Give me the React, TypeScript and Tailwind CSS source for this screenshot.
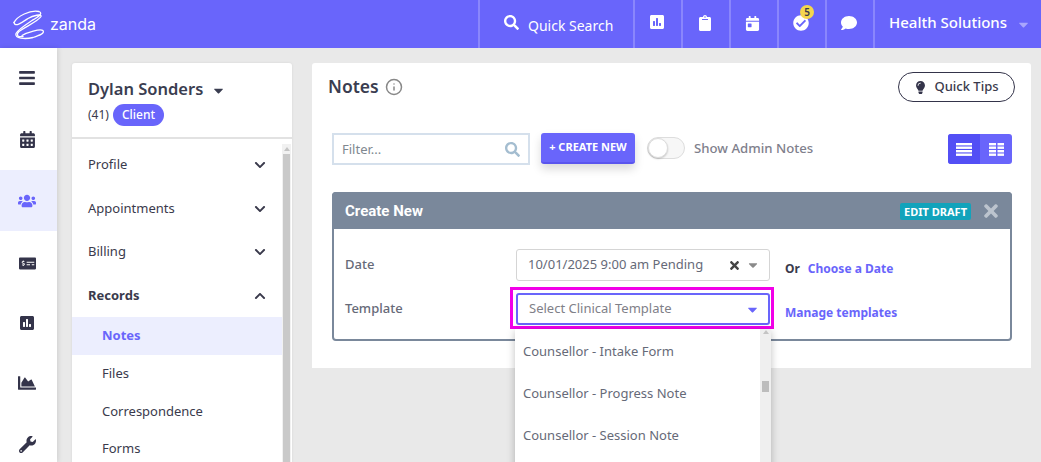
import React from 'react';
import {
  FaBars, FaCalendarAlt, FaCalendarDay, FaCaretDown, FaChartArea, FaCheckCircle, FaChevronDown, FaChevronUp,
  FaClipboard, FaComment, FaLightbulb, FaMoneyCheckAlt, FaPoll, FaSearch, FaTimes, FaUsers, FaWrench,
} from 'react-icons/fa';
import { FiInfo } from 'react-icons/fi';

const font = 'font-["Noto_Sans",sans-serif]';

const Logo = () => (
  <svg width="32" height="31" viewBox="0 0 32 30" fill="none" stroke="white" strokeWidth="1.3" strokeLinecap="round" strokeLinejoin="round">
    <path d="M1 13 C4 7 17 0 26 2 C31 4 24 8 19 11 C13 15 5 20 3 24 C1 29 12 30 20 28 C26 26 32 24 30 21 C27 19 14 23 9 26" />
    <path d="M1 13 C2 18 9 13 15 9 C20 6 29 4 28 7 C26 11 13 17 6 22 C3 25 4 28 10 27" />
  </svg>
);

const TopIcon = ({ children }: { children: React.ReactNode }) => (
  <div className="relative w-12 flex items-center justify-center border-l-2 border-[#8a86fc] pr-[3px] text-white">{children}</div>
);

const railIcons = [
  { icon: <FaBars size={18} />, h: 'h-[60px]' },
  { icon: <FaCalendarAlt size={17} />, h: 'h-[62px]' },
  { icon: <FaUsers size={18} />, h: 'h-[61px]', active: true },
  { icon: <FaMoneyCheckAlt size={17} />, h: 'h-[60px] pt-[4px]' },
  { icon: <FaPoll size={16} />, h: 'h-[60px] pt-[4px]' },
  { icon: <FaChartArea size={18} />, h: 'h-[61px] pt-[2px]' },
  { icon: <FaWrench size={17} />, h: 'h-[61px] pt-[4px]' },
];

const menu = [
  { label: 'Profile', h: 'h-[44px]' },
  { label: 'Appointments', h: 'h-[43px]' },
  { label: 'Billing', h: 'h-[44px]' },
];

const subMenu = ['Files', 'Correspondence', 'Forms'];

const templates = ['Counsellor - Intake Form', 'Counsellor - Progress Note', 'Counsellor - Session Note'];

export default function App() {
  return (
    <div className={`${font} w-[1041px] h-[462px] overflow-hidden bg-[#e9e9e9] text-[#3a3a4c] flex flex-col`}>
      <header className="h-12 shrink-0 bg-[#6965fb] flex text-white">
        <div className="flex items-center gap-[5px] pl-[13px] pt-[1px]">
          <Logo />
          <span className='font-["Inter",sans-serif] text-[16px] leading-none pb-[2px]'>zanda</span>
        </div>
        <div className="ml-auto flex">
          <div className="w-[155px] flex items-center gap-[9px] pl-[24px] border-l-2 border-[#8a86fc]">
            <FaSearch size={15} className="-mt-1" />
            <span className="text-sm pt-[3px]">Quick Search</span>
          </div>
          <TopIcon><FaPoll size={16} className="-mt-1" /></TopIcon>
          <TopIcon><FaClipboard size={16} className="-mt-[2px]" /></TopIcon>
          <TopIcon><FaCalendarDay size={15} className="-mt-[2px]" /></TopIcon>
          <TopIcon>
            <FaCheckCircle size={16} className="-mt-[2px]" />
            <span className="absolute left-[21px] top-[5px] w-[14px] h-[14px] rounded-full bg-[#f4d64e] text-[#3a3a4c] text-[10px] font-semibold leading-[14px] text-center">5</span>
          </TopIcon>
          <TopIcon><FaComment size={16} className="-mt-[2px]" /></TopIcon>
          <div className="w-[168px] flex items-center gap-[9px] pl-[14px] border-l-2 border-[#8a86fc] pb-[3px]">
            <span className="text-[15px] font-medium">Health Solutions</span>
            <FaCaretDown size={15} className="text-[#a9a6fd] mt-[3px]" />
          </div>
        </div>
      </header>

      <div className="flex-1 flex min-h-0">
        <nav className="w-[57px] shrink-0 bg-white shadow-[1px_0_5px_rgba(0,0,0,0.12)] pr-[3px]">
          {railIcons.map((item, i) => (
            <div
              key={i}
              className={`${item.h} -mr-[3px] pr-[3px] flex items-center justify-center ${item.active ? 'bg-[#eceefe] text-[#6965fb]' : 'text-[#34344a]'}`}
            >
              {item.icon}
            </div>
          ))}
        </nav>

        <aside className="ml-[15px] mt-[15px] w-[220px] shrink-0 bg-white rounded-t-[3px] shadow-[0_0_3px_rgba(0,0,0,0.08)] self-start">
          <div className="h-[76px] border-b-2 border-[#e2e2e2] pl-4 pt-[15px]">
            <div className="flex items-center gap-2 text-[16.5px] font-semibold leading-[22px] text-[#3a3d50]">
              Dylan Sonders
              <FaCaretDown size={15} className="mt-[3px]" />
            </div>
            <div className="flex items-center gap-[4px] mt-[4px] text-xs">
              (41)
              <span className="h-[22px] px-[9px] rounded-full bg-[#6965fb] text-white font-medium leading-[22px]">Client</span>
            </div>
          </div>
          <div className="relative h-[324px] pt-1 pr-[10px] text-[13px]">
            {menu.map((m) => (
              <div key={m.label} className={`${m.h} flex items-center justify-between pl-4 pr-[16px]`}>
                {m.label}
                <FaChevronDown size={12} />
              </div>
            ))}
            <div className="h-[44px] flex items-center justify-between pl-4 pr-[16px] font-bold">
              Records
              <FaChevronUp size={12} />
            </div>
            <div className="h-[38px] mt-[-1px] flex items-center pl-[30px] bg-[#eceefe] text-[#6965fb] font-bold">Notes</div>
            {subMenu.map((s) => (
              <div key={s} className="h-[37.5px] flex items-center pl-[30px]">{s}</div>
            ))}
            <div className="absolute right-[1px] top-[5px] bottom-0 w-[9px] bg-[#f1f1f1]">
              <div className="h-[10px] flex justify-center pt-[3px]">
                <div className="w-0 h-0 border-x-[3px] border-x-transparent border-b-[4px] border-b-[#c4c4c4]" />
              </div>
              <div className="mx-auto w-[7px] h-full bg-[#c9c9c9]" />
            </div>
          </div>
        </aside>

        <main className="ml-5 mt-[15px] w-[719px] h-[305px] shrink-0 bg-white rounded-t-[3px] px-[20px] relative">
          <div className="flex items-center justify-between pt-[9px] -ml-1 -mr-[4px]">
            <div className="flex items-center gap-[6px] pb-[1px]">
              <h1 className="text-[17.5px] font-semibold text-[#3a3d50]">Notes</h1>
              <FiInfo size={18} className="text-[#888] mt-[1px]" />
            </div>
            <button className="w-[117px] h-[30px] rounded-full border border-[#34344a] flex items-center justify-center gap-[7px] text-[13px] font-medium">
              <FaLightbulb size={13} className="text-[#34344a]" />
              Quick Tips
            </button>
          </div>

          <div className="flex items-start mt-[31px]">
            <div className="w-[198px] h-8 border-2 border-[#d5e0ec] flex items-center justify-between pl-2 pr-2">
              <span className="text-[13px] text-[#808890] pt-[1px]">Filter...</span>
              <FaSearch size={15} className="text-[#a4bdd0]" />
            </div>
            <button className="ml-[11px] w-[94px] h-[31px] rounded-[3px] bg-[#6965fb] border-b-2 border-[#5a55ee] pb-[1px] text-white text-[11px] font-bold shadow-[0_5px_10px_rgba(0,0,0,0.15)]">
              + CREATE NEW
            </button>
            <div className="ml-[12px] mt-[4px] w-[38px] h-[22px] rounded-full border border-[#ddd] bg-[#f7f7f7] relative">
              <div className="absolute left-0 top-0 w-5 h-5 rounded-full bg-white border border-[#ddd] shadow-[0_1px_2px_rgba(0,0,0,0.2)]" />
            </div>
            <span className="ml-[9px] mt-[6px] text-[13.2px] font-medium text-[#80808c]">Show Admin Notes</span>
            <div className="ml-auto -mr-[1px] mt-[1px] w-[64px] h-[30px] rounded-[3px] bg-[#6965fb] flex overflow-hidden">
              <div className="w-8 bg-[#534ff5] flex items-center justify-center">
                <svg width="16" height="13" viewBox="0 0 16 13" fill="white">
                  <rect y="0" width="16" height="2.4" /><rect y="3.5" width="16" height="2.4" /><rect y="7" width="16" height="2.4" /><rect y="10.5" width="16" height="2.4" />
                </svg>
              </div>
              <div className="w-8 flex items-center justify-center">
                <svg width="15" height="13" viewBox="0 0 15 13" fill="white">
                  <rect y="0" width="7" height="2.4" /><rect x="8.5" y="0" width="6.5" height="2.4" />
                  <rect y="3.5" width="7" height="2.4" /><rect x="8.5" y="3.5" width="6.5" height="2.4" />
                  <rect y="7" width="7" height="2.4" /><rect x="8.5" y="7" width="6.5" height="2.4" />
                  <rect y="10.5" width="7" height="2.4" /><rect x="8.5" y="10.5" width="6.5" height="2.4" />
                </svg>
              </div>
            </div>
          </div>

          <section className="mt-[27px] w-[680px] h-[149px] rounded-[4px] border-2 border-[#7a889b] relative">
            <div className="h-[37px] -mt-[2px] -mx-[2px] bg-[#7a889b] rounded-t-[4px] flex items-center pl-[13px] pr-[11px] text-white">
              <span className='font-["Roboto",sans-serif] text-[15px] font-bold pt-[1px]'>Create New</span>
              <span className="ml-auto h-[17px] px-1 rounded-[2px] bg-[#12a3bb] text-[11px] font-bold leading-[17px] mt-[2px]">EDIT DRAFT</span>
              <FaTimes size={20} className="ml-[10px] text-[#bcc4ce]" />
            </div>
            <div className="flex pl-[11px] pt-[20px]">
              <div className="w-[171px] shrink-0 text-[13px] font-medium text-[#666a78]">
                <div className="h-[44px] pt-[6px]">Date</div>
                <div className="pt-[6px]">Template</div>
              </div>
              <div className="w-[254px] shrink-0">
                <div className="h-8 rounded-[3px] border border-[#d5d5d5] flex items-center pl-[11px] pr-[9px] text-[13px] text-[#666a78]">
                  10/01/2025 9:00 am Pending
                  <FaTimes size={13} className="ml-auto text-[#444]" />
                  <FaCaretDown size={14} className="ml-[5px] text-[#8a8a8a]" />
                </div>
                <div className="relative mt-3 h-8 rounded-[3px] border-2 border-[#6965fb] flex items-center pl-[11px] pr-[8px] text-[13px] text-[#808088]">
                  Select Clinical Template
                  <FaCaretDown size={15} className="ml-auto text-[#6965fb]" />
                  <div className="absolute -left-[8px] -top-[8px] -right-[6px] -bottom-[6px] border-[3px] border-[#f200e8] pointer-events-none" />
                </div>
              </div>
              <div className="ml-[15px] text-xs font-bold text-[#6965fb]">
                <div className="h-[44px] pt-[12px]"><span className="text-xs text-[#3a3a4c] mr-2">Or</span>Choose a Date</div>
                <div className="pt-[12px]">Manage templates</div>
              </div>
            </div>
          </section>

          <div className="absolute left-[203px] top-[266px] w-[256px] h-[140px] bg-white shadow-[0_2px_8px_rgba(0,0,0,0.25)] flex">
            <ul className="flex-1 pl-2 pt-[2px] text-[13px] text-[#666a78]">
              {templates.map((t) => (
                <li key={t} className="h-[42px] flex items-center">{t}</li>
              ))}
            </ul>
            <div className="w-[11px] bg-[#efefef] relative">
              <div className="h-[8px] flex justify-center pt-[1px]">
                <div className="w-0 h-0 border-x-[3px] border-x-transparent border-b-[4px] border-b-[#c4c4c4]" />
              </div>
              <div className="absolute left-[2px] top-[52px] w-[7px] h-[11px] bg-[#bdbdbd]" />
            </div>
          </div>
        </main>
      </div>
    </div>
  );
}
